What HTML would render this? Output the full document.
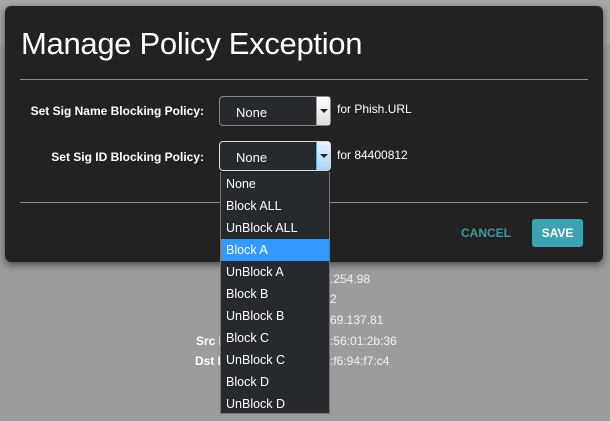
<!DOCTYPE html>
<html><head><style>
*{margin:0;padding:0;box-sizing:border-box}
body{width:610px;height:421px;background:#9c9c9c;font-family:"Liberation Sans","DejaVu Sans",sans-serif;position:relative;overflow:hidden}
.topbar{position:absolute;left:0;top:0;width:610px;height:44px;background:#a6a6a6}
.bg{position:absolute;color:#f2f2f2;font-size:12px}
.bgl{position:absolute;color:#fff;font-size:12px;font-weight:bold}
.modal{position:absolute;left:5px;top:6px;width:598px;height:256px;background:#222;border-radius:6px;box-shadow:0 3px 8px rgba(0,0,0,.5)}
h1{position:absolute;left:16px;top:20px;font-size:31px;font-weight:normal;color:#fff;letter-spacing:-0.3px}
.hr{position:absolute;left:15px;width:568px;height:1px;background:#8a8a8a}
.lab{position:absolute;right:399px;font-size:12px;font-weight:bold;color:#fff;white-space:nowrap}
.sel{position:absolute;left:214px;width:112px;height:30px;border:1px solid #888;border-radius:4px;background:#26292d;color:#fff;font-size:13px;padding:8px 0 0 16px}
.arr{position:absolute;right:0;top:0;width:14px;height:28px;background:linear-gradient(#fff,#ddd);border-left:1px solid #999}
.arr:after{content:"";position:absolute;left:3px;top:12px;border-left:4px solid transparent;border-right:4px solid transparent;border-top:4px solid #222}
.arr.b{background:linear-gradient(#e6f3ff,#a9d6fb);border-left-color:#5aa9ea}
.for{position:absolute;left:332px;font-size:12px;color:#fff}
.dd{position:absolute;left:220px;top:172px;width:110px;height:242px;background:#26292d;border:1px solid #777;border-top:none;padding-top:1px}
.dd div{height:22px;line-height:22px;padding-left:5px;color:#fff;font-size:12.5px}
.dd .h{background:#3399ff}
.cancel{position:absolute;left:456px;top:220px;color:#3a9aa6;font-weight:bold;font-size:12px}
.save{position:absolute;left:527px;top:213px;width:51px;height:28px;background:#3ba3b2;border-radius:3px;color:#fff;font-weight:bold;font-size:12px;text-align:center;line-height:28px}
</style></head><body>
<div class="topbar"></div>
<div class="bg" style="left:330px;top:272px">.254.98</div>
<div class="bg" style="left:330px;top:292px">2</div>
<div class="bg" style="left:330px;top:313px">69.137.81</div>
<div class="bg" style="left:330px;top:334px">:56:01:2b:36</div>
<div class="bg" style="left:330px;top:354px">:f6:94:f7:c4</div>
<div class="bgl" style="left:196px;top:334px">Src I</div>
<div class="bgl" style="left:195px;top:354px">Dst I</div>
<div class="modal">
<h1>Manage Policy Exception</h1>
<div class="hr" style="top:73px"></div>
<div class="lab" style="top:98px">Set Sig Name Blocking Policy:</div>
<div class="sel" style="top:90px">None<div class="arr"></div></div>
<div class="for" style="top:96px">for Phish.URL</div>
<div class="lab" style="top:144px">Set Sig ID Blocking Policy:</div>
<div class="sel" style="top:135px;border-color:#ddd">None<div class="arr b"></div></div>
<div class="for" style="top:142px">for 84400812</div>
<div class="hr" style="top:196px"></div>
<div class="cancel">CANCEL</div>
<div class="save">SAVE</div>
</div>
<div class="dd"><div>None</div><div>Block ALL</div><div>UnBlock ALL</div><div class="h">Block A</div><div>UnBlock A</div><div>Block B</div><div>UnBlock B</div><div>Block C</div><div>UnBlock C</div><div>Block D</div><div>UnBlock D</div></div>
</body></html>
